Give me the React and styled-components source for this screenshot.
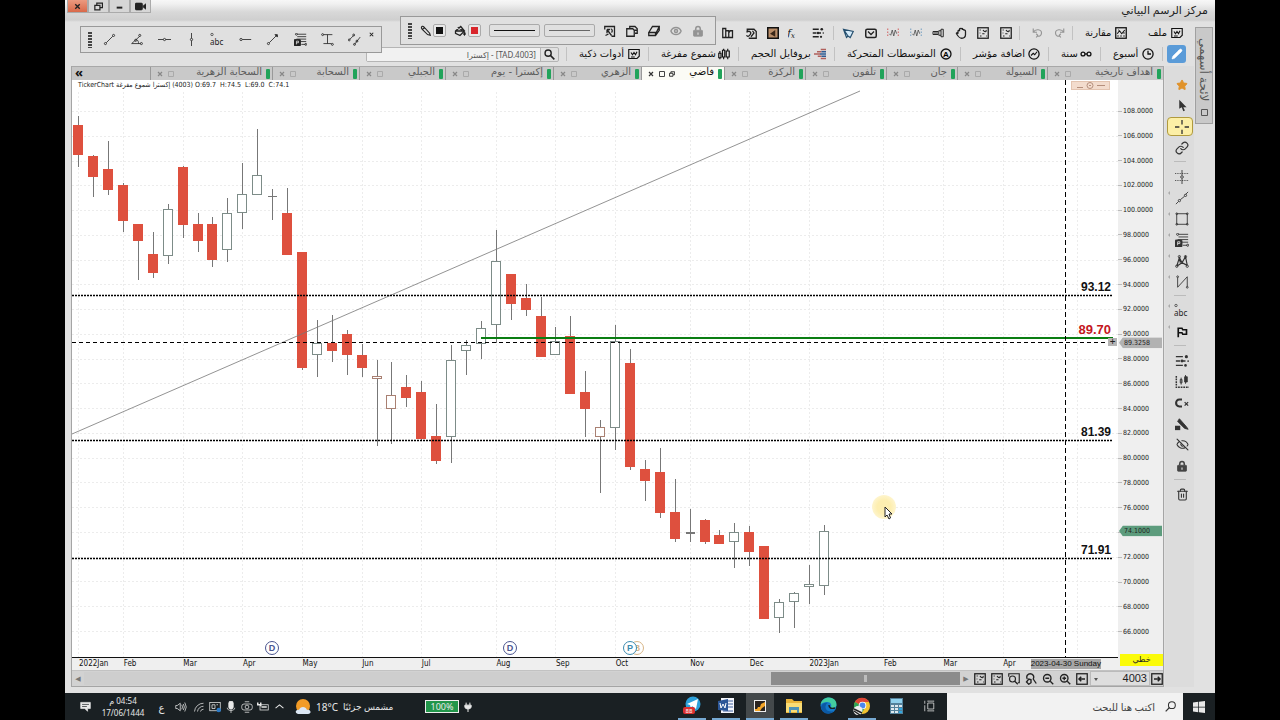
import * as React from 'react'
import styled, { createGlobalStyle, css } from 'styled-components'
import { Link, Lock, Star, Trash2, Eye, EyeOff, Pencil } from 'lucide-react'

const Global = createGlobalStyle`
    html, body, #root {
        height: 100%;
    }

    body {
        background: #000;
        margin: 0;
    }

    button, input, select {
        color: inherit;
        font: inherit;
    }

    button {
        background: none;
        border: 0;
        cursor: pointer;
        padding: 0;
    }
`

const Desktop = styled.div`
    box-sizing: border-box;
    color: #222;
    display: flex;
    flex-flow: column;
    font-family: 'Noto Sans', 'DejaVu Sans', sans-serif;
    font-size: 11px;
    height: 100vh;
    overflow: hidden;
    padding: 0 65px;
`

const Window = styled.div`
    background: #e1e1e1;
    display: flex;
    flex: 1;
    flex-flow: column;
    min-height: 0;
    position: relative;
`

const TitleBar = styled.header`
    align-items: flex-start;
    background: linear-gradient(#f7f7f7 0, #f0f0f0 4px, #d8d8d8 12px, #cfcfcf 20px, #e1e1e1 22px);
    display: flex;
    height: 22px;
    justify-content: space-between;
    padding: 0 7px 0 2px;
`

const WindowButtons = styled.div`
    display: flex;
`

const WindowButton = styled.button`
    align-items: center;
    background: ${(props) => (props.$close ? 'linear-gradient(#eb9a80, #d9694a)' : '#d6d6d6')};
    border: 1px solid #aaa;
    border-top: 0;
    display: flex;
    height: 13px;
    justify-content: center;
    width: 21px;
`

const WindowTitle = styled.h1`
    font-size: 11px;
    font-weight: 400;
    line-height: 19px;
    margin: 0;
`

const Body = styled.div`
    display: flex;
    flex: 1;
    min-height: 0;
    padding: 0 2px 6px 6px;
`

const Main = styled.div`
    display: flex;
    flex: 1;
    flex-flow: column;
    min-width: 0;
`

const Toolbar = styled.div`
    align-items: center;
    box-sizing: border-box;
    direction: rtl;
    display: flex;
    height: ${(props) => props.$height}px;
    padding-right: ${(props) => props.$inset}px;
`

const Separator = styled.i`
    background: #c2c2c2;
    height: 14px;
    margin-right: ${(props) => props.$space}px;
    width: 1px;
`

const ToolGroup = styled.div`
    display: flex;
    margin-right: ${(props) => props.$space}px;
    width: ${(props) => props.$width}px;

    & > button {
        flex: 1;
    }
`

const IconButton = styled.button`
    align-items: center;
    display: flex;
    height: 20px;
    justify-content: center;
    opacity: ${(props) => (props.$faded ? 0.4 : 1)};
`

const LabelButton = styled.button`
    align-items: center;
    color: #111;
    display: flex;
    font-family: 'DejaVu Sans', sans-serif;
    font-size: 10px;
    justify-content: space-between;
    line-height: 18px;
    margin-right: ${(props) => props.$space}px;
    white-space: nowrap;
    width: ${(props) => props.$width}px;
`

const EditButton = styled.button`
    align-items: center;
    background: #5a9bd8;
    border-radius: 3px;
    color: #fff;
    display: flex;
    height: 18px;
    justify-content: center;
    width: 19px;
`

const SearchBox = styled.div`
    border: 1px solid #b5b5b5;
    border-radius: 2px;
    box-sizing: border-box;
    display: flex;
    height: 15px;
    margin-right: 7px;
    width: 193px;
`

const SearchInput = styled.input`
    background: #f1f1f1;
    border: 0;
    border-right: 1px solid #b5b5b5;
    color: #555;
    flex: 1;
    font-size: 8px;
    min-width: 0;
    outline: 0;
    padding: 0 4px;
`

const SearchButton = styled.button`
    align-items: center;
    display: flex;
    justify-content: center;
    width: 17px;
`

const Palette = styled.div`
    align-items: center;
    background: #e0e0e0;
    border: 1px solid #999;
    box-sizing: border-box;
    display: flex;
    height: ${(props) => props.$height}px;
    left: ${(props) => props.$left}px;
    padding: 0 6px 0 7px;
    position: absolute;
    top: ${(props) => props.$top}px;
    width: ${(props) => props.$width}px;
    z-index: 10;
`

const Grip = styled.i`
    background: radial-gradient(circle at 1px 1px, #444 1px, transparent 1px) 0 0 / 2px 3px;
    height: 16px;
    width: 4px;
`

const PaletteTools = styled.div`
    display: flex;
    flex: 1;
    padding-left: ${(props) => props.$space || 0}px;

    & > button {
        flex: 1;
    }
`

const PenTools = styled.div`
    align-items: center;
    display: flex;
    padding-left: 8px;
`

const CloseButton = styled.button`
    align-self: flex-start;
    display: flex;
    margin-top: 4px;
`

const Swatch = styled.button`
    background: ${(props) => props.$color};
    border: 3px solid #e8e8e8;
    border-radius: 2px;
    box-sizing: border-box;
    height: 13px;
    margin: 0 8px 0 2px;
    outline: 1px solid #aaa;
    outline-offset: -1px;
    width: 13px;
`

const LineStyle = styled.button`
    align-items: center;
    border: 1px solid #aaa;
    border-radius: 2px;
    box-sizing: border-box;
    display: flex;
    height: 13px;
    margin-right: 4px;
    padding: 0 4px;
    width: 51px;

    &::after {
        background: ${(props) => props.$color};
        content: '';
        flex: 1;
        height: 1px;
    }
`

const Workspace = styled.div`
    display: flex;
    flex: 1;
    margin-top: 2px;
    min-height: 0;
`

const ChartColumn = styled.div`
    border: 1px solid #a5a5a5;
    border-top: 0;
    box-sizing: border-box;
    display: flex;
    flex: 1;
    flex-flow: column;
    min-width: 0;
`

const Tabs = styled.nav`
    background: #c6c6c6;
    border-top: 1px solid #a8a8a8;
    box-sizing: border-box;
    direction: rtl;
    display: flex;
    height: 14px;
`

const TabItem = styled.div`
    align-items: center;
    background: ${(props) => (props.$active ? '#fbfbf5' : '#c9c9c9')};
    border-left: 1px solid #999;
    box-sizing: border-box;
    color: ${(props) => (props.$active ? '#111' : '#5c5c5c')};
    display: flex;
    flex: 0 0 ${(props) => props.$width}px;
    gap: 4px;
    padding: 0 2px 0 5px;
`

const TabName = styled.button`
    flex: 1;
    font-family: 'DejaVu Sans', sans-serif;
    font-size: 10px;
    line-height: 10px;
    padding-bottom: 3px;
    text-align: right;
    white-space: nowrap;
`

const Marker = styled.i`
    background: #21a35a;
    border-radius: 1px;
    height: 10px;
    width: 4px;
`

const TabMore = styled.button`
    color: #111;
    font-size: 13px;
    font-weight: 700;
    line-height: 9px;
    margin-right: auto;
    padding: 0 3px 3px;
`

const ChartArea = styled.div`
    display: flex;
    flex: 1;
    min-height: 0;
`

const PlotColumn = styled.div`
    display: flex;
    flex: 1;
    flex-flow: column;
    min-width: 0;
`

const Plot = styled.div`
    background: #fff;
    border-bottom: 1px solid #111;
    box-sizing: border-box;
    flex: 1;
    min-height: 0;
    position: relative;
`

const PlotSvg = styled.svg`
    display: block;
    height: 100%;
    left: 0;
    position: absolute;
    top: 0;
    width: 100%;
`

const PlotCaption = styled.div`
    color: #222;
    font-family: 'DejaVu Sans Condensed', 'DejaVu Sans', sans-serif;
    font-size: 7px;
    left: 6px;
    line-height: 8px;
    position: absolute;
    top: 1px;
    white-space: pre;
`

const PlotMini = styled.div`
    align-items: center;
    background: #f3dccd;
    border: 1px solid #e3c4b0;
    box-sizing: border-box;
    color: #b99;
    display: flex;
    height: 9px;
    justify-content: space-around;
    position: absolute;
    right: 8px;
    top: 1px;
    width: 39px;
`

const LevelLabel = styled.span`
    color: ${(props) => props.$color};
    font-family: 'Liberation Sans', Arial, sans-serif;
    font-size: ${(props) => props.$size}px;
    font-weight: 700;
    line-height: 14px;
    position: absolute;
    right: 7px;
    transform: translateY(-100%);
`

const EventBadge = styled.span`
    align-items: center;
    background: #fff;
    border: 1px solid ${(props) => props.$color};
    border-radius: 50%;
    bottom: 2px;
    box-sizing: border-box;
    color: ${(props) => props.$color};
    display: flex;
    font-family: 'Liberation Sans', Arial, sans-serif;
    font-size: 9px;
    font-weight: 700;
    height: 14px;
    justify-content: center;
    position: absolute;
    transform: translateX(-50%);
    width: 14px;
`

const CrossHandle = styled.span`
    background: #b5b5b5;
    font-size: 10px;
    height: 8px;
    line-height: 7px;
    position: absolute;
    right: 1px;
    text-align: center;
    transform: translateY(-50%);
    width: 9px;
`

const Pointer = styled.div`
    background: radial-gradient(circle, #fdeeb0 40%, #fffbea 100%);
    border-radius: 50%;
    height: 24px;
    position: absolute;
    transform: translate(-50%, -50%);
    width: 24px;

    svg {
        left: 12px;
        overflow: visible;
        position: absolute;
        top: 11px;
    }
`

const Dates = styled.div`
    background: #efefef;
    box-sizing: border-box;
    color: #111;
    display: flex;
    font-family: 'DejaVu Sans Condensed', 'DejaVu Sans', sans-serif;
    font-size: 8px;
    height: 12px;
    line-height: 11px;
    padding-left: 7px;
    position: relative;
`

const Month = styled.span`
    flex: ${(props) => props.$weeks} 0 0;
    min-width: 0;
    white-space: nowrap;
`

const DateTag = styled.span`
    background: #a6a6a6;
    font-family: 'Liberation Sans', Arial, sans-serif;
    line-height: 10px;
    position: absolute;
    right: 17px;
    top: 1px;
`

const PriceAxis = styled.div`
    background: #efefef;
    display: flex;
    flex: 0 0 45px;
    flex-flow: column;
    font-family: 'DejaVu Sans Condensed', 'DejaVu Sans', sans-serif;
    font-size: 7px;
    justify-content: space-between;
    position: relative;
`

const Scale = styled.div`
    display: flex;
    flex: 1;
    flex-flow: column;
    justify-content: space-between;
    min-height: 0;
    padding: 26px 0 17px;
`

const Price = styled.span`
    align-items: center;
    display: flex;
    gap: 1px;
    height: 10px;
    line-height: 10px;

    &::before {
        background: #bbb;
        content: '';
        height: 1px;
        width: 4px;
    }
`

const PriceTag = styled.span`
    background: ${(props) => props.$color};
    clip-path: polygon(0 50%, 4px 0, 100% 0, 100% 100%, 4px 100%);
    left: 1px;
    line-height: 11px;
    padding-left: 5px;
    position: absolute;
    right: 1px;
    transform: translateY(-50%);
`

const ScaleMode = styled.button`
    background: #fbfb0a;
    font-family: 'DejaVu Sans', sans-serif;
    font-size: 8px;
    height: 12px;
    line-height: 12px;
    margin: 0 0 4px 2px;
`

const BottomBar = styled.div`
    align-items: center;
    background: #d2d2d2;
    border-top: 1px solid #c2c2c2;
    box-sizing: border-box;
    display: flex;
    height: 16px;
`

const Scroll = styled.div`
    align-items: center;
    display: flex;
    flex: 1;
    height: 100%;
`

const ScrollArrow = styled.button`
    color: #777;
    font-size: 7px;
    line-height: 10px;
    width: 12px;
`

const Track = styled.div`
    background: #cecece;
    display: flex;
    flex: 1;
    height: 13px;
    justify-content: flex-end;
`

const Thumb = styled.div`
    align-items: center;
    background: #8c8c8c;
    display: flex;
    justify-content: center;
    width: 21.6%;

    &::after {
        background: #bdbdbd;
        content: '';
        height: 7px;
        width: 3px;
    }
`

const BottomTools = styled.div`
    align-items: center;
    display: flex;
    width: 118px;

    & > button {
        flex: 1;
        height: 15px;
    }
`

const CodeSelect = styled.select`
    appearance: none;
    background: #dedede url("data:image/svg+xml,%3Csvg xmlns='http://www.w3.org/2000/svg' width='5' height='4'%3E%3Cpath d='M0 0h4L2 3z' fill='%23555'/%3E%3C/svg%3E") 3px 6px no-repeat;
    border: 1px solid #bbb;
    font-family: 'Liberation Sans', Arial, sans-serif;
    font-size: 11px;
    height: 15px;
    line-height: 13px;
    padding: 0 2px;
    text-align: right;
    text-align-last: right;
    width: 60px;
`

const NextButton = styled.button`
    align-items: center;
    display: flex;
    height: 15px;
    justify-content: center;
    width: 13px;
`

const ToolColumn = styled.aside`
    align-items: center;
    background: #dcdcdc;
    display: flex;
    flex: 0 0 29px;
    flex-flow: column;
    margin-left: 1px;
    padding-top: 8px;
`

const Tool = styled.button`
    align-items: center;
    box-sizing: border-box;
    color: #333;
    display: flex;
    height: 21px;
    justify-content: center;
    padding-left: 5px;
    position: relative;
    width: 26px;

    ${(props) =>
        props.$active &&
        css`
            background: #fcefa6;
            border: 1px solid #b09a3e;
            border-radius: 4px;
            height: 19px;
            margin: 1px 0;
            padding-left: 4px;
        `}

    ${(props) =>
        props.$menu &&
        css`
            &::before {
                border: 2px solid transparent;
                border-right-color: #aaa;
                content: '';
                left: -1px;
                position: absolute;
                top: 4px;
            }
        `}
`

const ToolRule = styled.hr`
    border: 0;
    border-top: 1px solid #bbb;
    margin: 3px 0 4px;
    width: 12px;
`

const SidePanel = styled.aside`
    box-sizing: border-box;
    padding: 5px 0 0 1px;
    width: 19px;
`

const SideTab = styled.button`
    align-items: center;
    background: #c9c9c9;
    border: 1px solid #a0a0a0;
    box-sizing: border-box;
    color: #555;
    direction: rtl;
    display: flex;
    font-size: 12px;
    gap: 8px;
    height: 97px;
    padding: 7px 0;
    white-space: nowrap;
    width: 18px;
    writing-mode: vertical-rl;
`

const Taskbar = styled.footer`
    align-items: center;
    background: #1a2023;
    color: #e8e8e8;
    display: flex;
    font-size: 10px;
    height: 27px;
`

const Tray = styled.div`
    align-items: center;
    display: flex;
    flex: 1;
    padding-left: 12px;
`

const TrayButton = styled.button`
    align-items: center;
    display: flex;
    height: 27px;
    justify-content: center;
    width: ${(props) => props.$width || 17}px;
`

const Clock = styled.button`
    font-size: 8px;
    line-height: 12px;
    text-align: center;
    width: 58px;
`

const Weather = styled.button`
    align-items: center;
    display: flex;
    gap: 5px;
    line-height: 16px;
    margin-left: 8px;
    white-space: nowrap;
    width: 99px;
`

const WeatherText = styled.span`
    font-size: 9px;
`

const Battery = styled.div`
    background: #22964a;
    border: 1px solid #eee;
    box-sizing: border-box;
    font-size: 9px;
    height: 13px;
    line-height: 11px;
    margin-left: 31px;
    text-align: center;
    width: 34px;
`

const AppButton = styled.button`
    align-items: center;
    background: ${(props) => (props.$active ? '#44494b' : 'none')};
    border-bottom: 2px solid ${(props) => (props.$open ? '#76a9d2' : 'transparent')};
    box-sizing: border-box;
    display: flex;
    height: 27px;
    justify-content: center;
    margin: 0 3px;
    width: 28px;
`

const TaskSearch = styled.label`
    align-items: center;
    background: #f2f2f2;
    box-sizing: border-box;
    color: #333;
    direction: rtl;
    display: flex;
    gap: 10px;
    height: 27px;
    padding: 0 7px;
    width: 236px;
`

const TaskInput = styled.input`
    background: none;
    border: 0;
    flex: 1;
    font-size: 10px;
    min-width: 0;
    outline: 0;
    padding: 0;

    &::placeholder {
        color: #444;
        opacity: 1;
    }
`

const StartButton = styled.button`
    align-items: center;
    display: flex;
    height: 27px;
    justify-content: center;
    width: 32px;
`

// 16 x 16 line drawings
const glyphs = {
    close: <path d="M4 4l8 8M12 4l-8 8" strokeWidth="2.4" />,
    restore: <path d="M5 6V2h10v8h-4M1.500 6h9v8h-9z" strokeWidth="2.2" />,
    minimize: <path d="M3 10h10" strokeWidth="3.500" />,
    camera: (
        <>
            <rect x="0" y="3" width="11" height="10" rx="2" fill="currentColor" />
            <path d="M12 7l4-3v8l-4-3z" fill="currentColor" />
        </>
    ),
    segment: (
        <>
            <path d="M4 12l8-8" />
            <circle cx="3" cy="13" r="1.300" />
            <circle cx="13" cy="3" r="1.300" />
        </>
    ),
    angle: (
        <>
            <path d="M2 13L12 4M2 13h11M8 8c2 1 2.500 3 2.500 5" />
            <circle cx="12" cy="3" r="1.300" />
            <circle cx="7" cy="9" r="1.300" />
            <circle cx="14" cy="13" r="1.300" />
        </>
    ),
    horizontal: (
        <>
            <path d="M0 8h6.500M9.500 8H16" />
            <circle cx="8" cy="8" r="1.400" />
        </>
    ),
    vertical: (
        <>
            <path d="M8 0v6.500M8 9.500V16" />
            <circle cx="8" cy="8" r="1.400" />
        </>
    ),
    ray: (
        <>
            <path d="M4 8h11" />
            <circle cx="2.500" cy="8" r="1.400" />
        </>
    ),
    arrow: (
        <>
            <path d="M4 12l9-9" />
            <path d="M11 2h3v3z" fill="currentColor" />
            <circle cx="3" cy="13" r="1.300" />
        </>
    ),
    fib: (
        <>
            <path d="M4 1.500h11M4 4.500h11M3 7.500h12M8 10.500h7M9 14h5" />
            <circle cx="3" cy="1.500" r="1.200" />
            <circle cx="14.500" cy="14" r="1.200" />
            <rect x="0" y="8" width="8" height="8" rx="1" fill="currentColor" />
            <path d="M3 14v-4h2.500v2H3" stroke="#ddd" />
        </>
    ),
    measure: (
        <>
            <path d="M3 2h11M8 2v11M3 13h10" />
            <circle cx="2" cy="2" r="1.200" />
            <circle cx="14" cy="14" r="1.200" />
        </>
    ),
    channel: (
        <>
            <path d="M2 8l5-5M8 14l7-9" />
            <circle cx="1.500" cy="8.500" r="1.200" />
            <circle cx="7" cy="2.500" r="1.200" />
            <circle cx="8" cy="14" r="1.200" />
            <circle cx="11" cy="10" r="1.200" />
        </>
    ),
    pen: <path d="M2 4c0-2 2-3 4-1l8 9 1 3-4-1-8-8zM4 6l3-3" strokeWidth="1.600" />,
    bucket: (
        <>
            <path d="M2 8l7-6 5 6-6 6-6-3zM5 3l6 4M2 8h11" strokeWidth="1.700" />
            <path d="M14 9c2 3 1 4 0 5-2-1-1-3 0-5z" fill="currentColor" />
        </>
    ),
    select: <path d="M1 6V2h13v13h-4M2 14l4-2M4 6l6 8M4 6v5M4 6h4M9 5c3 1 2 4 1 5" strokeWidth="1.700" />,
    copy: <path d="M5 5V2h7l3 3v6h-3M1 5h8l2 2v8H1zM5 2v3M11 7h4" strokeWidth="1.700" />,
    eraser: <path d="M1 10l5-8h9l-4 8zM1 10v4h9l5-7V2M10 10v4" strokeWidth="1.700" />,
    chartBox: (
        <>
            <rect x="1" y="1" width="14" height="14" strokeWidth="1.700" />
            <path d="M3 9l3-4 3 4 4-5M3 12h2M7 12h2M11 12h2M4 4h1M11 8h2" strokeWidth="1.400" />
        </>
    ),
    smallBox: (
        <>
            <rect x="1" y="1" width="14" height="14" strokeWidth="1.700" />
            <path d="M3.500 4h1.500M3.500 8h1M4 12h2M8 4c2 3 5 3 4 0M7 9h3M12 12h1" strokeWidth="1.500" />
        </>
    ),
    scroll: <path d="M3 3h9l3 3v9H5M3 6V2M2 7c4-3 7 0 5 3s-4 3-5 1M10 5l2 3-4 5" strokeWidth="1.700" />,
    undo: <path d="M3 2v5h5M3 7c3-5 11-4 11 1 0 4-4 5-6 4M7 9l2 2-2 3" strokeWidth="1.500" />,
    redo: <path d="M13 2v5H8M13 7C10 2 2 3 2 8c0 4 4 5 6 4M9 9l-2 2 2 3" strokeWidth="1.500" />,
    hand: (
        <path
            d="M4 9V5.500c0-1.500 2-1.500 2 0V3c0-1.500 2-1.500 2 0 0-1.500 2-1.500 2 0v1c0-1.500 2-1 2 0v1c0-1.200 2-1 2 .5V10c0 3-2 5-5 5S5 14 2 9c-.5-1.500 1-2 2 0z"
            strokeWidth="1.700"
        />
    ),
    pin: <path d="M0 8h8M9 5v6M9 5h3M9 11h3M12 3h3v10h-3zM1 6h7M1 10h7" strokeWidth="1.300" />,
    waves: (
        <>
            <path d="M1 2v12M15 2v12" stroke="currentColor" strokeDasharray="2 2" />
            <path d="M3 9l2 2 2-7 2 8 2-8 2 5" stroke="#444" />
        </>
    ),
    mail: (
        <>
            <rect x="1" y="3" width="14" height="11" rx="2" strokeWidth="2" />
            <path d="M4 6l4 4 4-4" strokeWidth="1.700" />
        </>
    ),
    share: <path d="M2 3l13 3-4 8-3-2-2 2zM8 12L2 3" fill="#d6ecfb" stroke="#26506f" strokeWidth="1.600" />,
    settings: (
        <>
            <path d="M1 3h8M1 8h5M9 8h3M1 13h8" strokeWidth="1.700" />
            <circle cx="13" cy="3" r="1.800" fill="currentColor" stroke="none" />
            <circle cx="8" cy="8" r="1.600" fill="currentColor" stroke="none" />
            <circle cx="12" cy="13" r="1.500" fill="currentColor" stroke="none" />
            <circle cx="15" cy="8" r="1" fill="currentColor" stroke="none" />
        </>
    ),
    sound: (
        <>
            <rect x="1" y="1" width="14" height="14" fill="#b98d68" stroke="#111" strokeWidth="2" />
            <path d="M4 9l7-5v9z" fill="#3a2718" stroke="none" />
        </>
    ),
    bars: <path d="M1 14V2h4v12zM5 14V5h4v9zM9 14V8l2-3h3v9z" strokeWidth="1.700" />,
    clock: (
        <>
            <circle cx="8" cy="8" r="6.800" strokeWidth="1.700" />
            <path d="M8 3.500V8h4" strokeWidth="1.700" />
        </>
    ),
    range: (
        <>
            <circle cx="4" cy="8" r="2.600" strokeWidth="1.700" />
            <circle cx="12" cy="8" r="2.600" strokeWidth="1.700" />
            <path d="M6.500 8h3" strokeWidth="1.700" />
        </>
    ),
    trend: (
        <>
            <circle cx="8" cy="8" r="6.800" strokeWidth="1.700" />
            <path d="M4 10l3-3 2 2 3-4" strokeWidth="1.500" />
        </>
    ),
    profile: (
        <>
            <path d="M9 2h7M4 5h6M0 8h8M5 11h5M9 14h7" stroke="#b0605c" strokeWidth="2" />
            <path d="M10 5h6M8 8h8M10 11h6" stroke="#2e5b92" strokeWidth="2" />
        </>
    ),
    candles: (
        <path
            d="M1 7h3v6H1zM6 3h3v9H6zM11 4h4v8h-4zM2.500 4v3M2.500 13v2M7.500 1v2M7.500 12v3M13 1v3M13 12v3"
            strokeWidth="1.500"
        />
    ),
    smart: <path d="M1 14V2h14v9l-3 3zM4 6l2 3 2-3 2 3 2-4M4 12h5" strokeWidth="1.500" />,
    search: (
        <>
            <circle cx="6" cy="6" r="4.500" strokeWidth="2" />
            <path d="M9.500 9.500L15 15" strokeWidth="2.400" />
        </>
    ),
    zoomIn: (
        <>
            <circle cx="7" cy="7" r="5" strokeWidth="1.800" />
            <path d="M11 11l4 4M4.500 7h5M7 4.500v5" strokeWidth="1.800" />
        </>
    ),
    zoomOut: (
        <>
            <circle cx="7" cy="7" r="5" strokeWidth="1.800" />
            <path d="M11 11l4 4M4.500 7h5" strokeWidth="1.800" />
        </>
    ),
    zoomReset: <path d="M3 8c-2-4 1-7 4-7s6 3 4 7l4 6M8 9l-3-1-3 4 3 3 3-2z" strokeWidth="1.800" />,
    zoomArea: (
        <>
            <path d="M1 5V1h14v12h-2" strokeWidth="1.500" />
            <circle cx="6" cy="8" r="4" strokeWidth="1.500" />
            <path d="M9 11l4 4" strokeWidth="1.700" />
        </>
    ),
    previous: (
        <>
            <rect x="1" y="1" width="14" height="14" strokeWidth="1.700" />
            <path d="M12 8H4M7 5L4 8l3 3" strokeWidth="2" />
        </>
    ),
    next: (
        <>
            <rect x="1" y="1" width="14" height="14" strokeWidth="1.700" />
            <path d="M4 8h8M9 5l3 3-3 3" strokeWidth="2" />
        </>
    ),
    cursor: <path d="M4 1v11l3-2 2 5 2-1-2-4h4z" fill="currentColor" stroke="none" />,
    cross: <path d="M8 0v5M8 11v5M0 8h5M11 8h5" strokeWidth="1.500" />,
    crossThin: (
        <>
            <path d="M8 0v6M8 10v6" />
            <path d="M0 4h16M0 12h16" strokeDasharray="1 1" />
            <circle cx="8" cy="8" r="1.500" />
        </>
    ),
    line: (
        <>
            <path d="M1 15l3-3M6 10l5-4M12 4l3-3" />
            <circle cx="5" cy="11" r="1.300" />
            <circle cx="12" cy="5" r="1.300" />
        </>
    ),
    box: (
        <>
            <rect x="2" y="2" width="12" height="12" />
            <circle cx="2" cy="2" r="1" />
            <circle cx="14" cy="2" r="1" />
            <circle cx="2" cy="14" r="1" />
            <circle cx="14" cy="14" r="1" />
        </>
    ),
    pattern: (
        <>
            <path d="M2 14L5 4l3 6 4-7 2 10M2 14l6-4 6 3M5 4l1 6" strokeWidth="1.300" />
            <circle cx="5" cy="3" r="1.300" />
            <circle cx="12" cy="3" r="1.300" />
            <circle cx="2" cy="14" r="1.300" />
            <circle cx="14" cy="14" r="1.300" />
        </>
    ),
    zigzag: (
        <>
            <path d="M3 14V3M3 14L14 2v11" />
            <circle cx="3" cy="2" r="1" />
            <circle cx="14" cy="14" r="1" />
        </>
    ),
    flag: <path d="M3 15V3h5l1 2h5v6H9L8 9H3" strokeWidth="2.200" />,
    candleChart: (
        <>
            <path d="M1.500 1v13H16" strokeWidth="1.700" strokeDasharray="2 1" />
            <path d="M7 3v8M12 0v10" />
            <path d="M6 5h2v4H6z" />
            <path d="M11 2h3v6h-3z" fill="currentColor" />
        </>
    ),
    magnet: (
        <>
            <path d="M8 4H5C0 4 0 12 5 12h3" strokeWidth="2.400" />
            <path d="M11 7l4 4M15 7l-4 4" strokeWidth="1.400" />
        </>
    ),
    penLock: (
        <>
            <path d="M5 2l8 9 2 3-4-1-8-8z" fill="currentColor" />
            <rect x="0" y="10" width="6" height="5" fill="currentColor" stroke="none" />
        </>
    ),
    padlock: (
        <>
            <rect x="2" y="7" width="12" height="8" rx="1" fill="currentColor" />
            <path d="M5 7V5c0-4 6-4 6 0v2" strokeWidth="2" />
            <path d="M8 10v3" stroke="#ddd" strokeWidth="1.500" />
        </>
    ),
    notice: (
        <>
            <path d="M1 2h14v9h-4v4l-4-4H1z" fill="currentColor" />
            <path d="M3 5h10M3 8h7" stroke="#1a2023" />
        </>
    ),
    volume: <path d="M1 6h2l4-3v10L3 10H1zM9 5q2 3 0 6M11 4q3 4 0 8M13 2q4 6 0 12" />,
    wifi: <path d="M2 14A12 12 0 0 1 14 3M6 14a8 8 0 0 1 8-7M10 14a4 4 0 0 1 4-3" />,
    screen: (
        <>
            <rect x="1" y="2" width="14" height="11" />
            <path d="M4 5h4v5H4zM10 5h2" />
            <circle cx="13" cy="12" r="3" fill="#2a79c5" stroke="none" />
        </>
    ),
    mic: (
        <>
            <rect x="5" y="0" width="6" height="11" rx="3" fill="currentColor" />
            <path d="M3 9c0 5 10 5 10 0M8 13v3" />
        </>
    ),
    webcam: (
        <>
            <rect x="1" y="4" width="14" height="8" rx="3" />
            <circle cx="8" cy="8" r="2.500" />
            <path d="M5 1h6M5 15h6" />
        </>
    ),
    power: (
        <>
            <rect x="4" y="5" width="11" height="7" />
            <path d="M1 2v3h4M5 2v5M6 8h7" strokeWidth="2" />
        </>
    ),
    chevron: <path d="M1 11l7-6 7 6" strokeWidth="1.800" />,
    plug: <path d="M5 1v4M11 1v4M3 5h10v3c0 4-10 4-10 0zM8 11v5" fill="currentColor" strokeWidth="1.600" />,
    loupe: (
        <>
            <circle cx="10" cy="6" r="5" strokeWidth="1.500" />
            <path d="M6.500 9.500L1 15" strokeWidth="1.700" />
        </>
    ),
    taskView: <path d="M5 4h8v8H5zM5 1v1M13 1v1M5 14v1M13 14v1M5 1.500h8M5 14.500h8M1 1v4M1 7v8" />,
    windows: (
        <path
            d="M0 2l7-1v6.500H0zM8 1l8-1v7.500H8zM0 8.500h7V15l-7-1zM8 8.500h8V16l-8-1z"
            fill="currentColor"
            stroke="none"
        />
    )
}

const Icon = ({ name, size = 12, color }) => (
    <svg
        width={size}
        height={size}
        viewBox="0 0 16 16"
        fill="none"
        stroke="currentColor"
        color={color}
        aria-hidden="true">
        {glyphs[name]}
    </svg>
)

const AbcIcon = () => (
    <svg width="16" height="16" viewBox="0 0 16 16" aria-hidden="true">
        <circle cx="2" cy="2.500" r="1.200" fill="none" stroke="#444" strokeWidth="0.800" />
        <text x="0" y="13" fontSize="8" fontFamily="Noto Sans, sans-serif" fill="#222">
            abc
        </text>
    </svg>
)

const FxIcon = () => (
    <svg width="14" height="14" viewBox="0 0 14 14" aria-hidden="true">
        <g fontStyle="italic" fontFamily="DejaVu Serif, serif" fill="#111">
            <text x="3" y="10" fontSize="10">f</text>
            <text x="7" y="12" fontSize="7">x</text>
        </g>
    </svg>
)

const AverageIcon = () => (
    <svg width="12" height="12" viewBox="0 0 12 12" aria-hidden="true">
        <circle cx="6" cy="6" r="5" fill="none" stroke="#111" strokeWidth="1.300" />
        <text x="6" y="9" fontSize="8" fontWeight="700" textAnchor="middle" fontFamily="Liberation Sans, sans-serif">
            A
        </text>
    </svg>
)

const TelegramIcon = () => (
    <svg width="18" height="19" viewBox="0 0 18 19" aria-hidden="true">
        <circle cx="10" cy="8" r="7.500" fill="#2ca0da" />
        <path d="M4 8l11-5-2 10-4-3-1 3-1-4z" fill="#fff" />
        <rect x="0" y="11" width="12" height="7" rx="2" fill="#dc3030" />
        <text x="6" y="17" fontSize="6" fill="#fff" textAnchor="middle" fontFamily="Noto Sans, sans-serif">
            88
        </text>
    </svg>
)

const WordIcon = () => (
    <svg width="16" height="16" viewBox="0 0 16 16" aria-hidden="true">
        <path d="M3 0h13v15H3z" fill="#f4f6fb" />
        <path d="M10 3h5M10 6h5M10 9h5M5 13h10" stroke="#40609d" />
        <path d="M0 3l10-2v12L0 12z" fill="#2c5697" />
        <path d="M2 5l1 5 2-4 2 4 1-5" stroke="#fff" fill="none" />
    </svg>
)

const TickerIcon = () => (
    <svg width="12" height="12" viewBox="0 0 12 12" aria-hidden="true">
        <rect width="12" height="12" fill="#eee" />
        <rect x="1" y="1" width="10" height="10" fill="#2a2420" />
        <path d="M1 11V9h2l1-2h2l1-3 4-2v4L8 8l-2 3z" fill="#f3a629" />
    </svg>
)

const FolderIcon = () => (
    <svg width="16" height="14" viewBox="0 0 16 14" aria-hidden="true">
        <path d="M0 0h6l2 2h8v12H0z" fill="#e9b43a" />
        <path d="M0 4h16v9H0z" fill="#f9dc76" />
        <path d="M3 14V8h10v6h-2v-3H5v3z" fill="#4d92b8" />
    </svg>
)

const EdgeIcon = () => (
    <svg width="17" height="17" viewBox="0 0 17 17" aria-hidden="true">
        <circle cx="8.500" cy="8.500" r="8" fill="#1479c9" />
        <path d="M.5 8C1 3 5 .5 9 .5s8 3 7.500 7.500c-.5 3-4 4-6 3 2-3 0-6-3-6S1 6 .5 8z" fill="#43cda0" />
        <path d="M6 8c-2 4 2 8 8 6-6 6-13 1-13-4 1-4 4-5 7-4-1 0-2 1-2 2z" fill="#0c59a4" />
        <path d="M9 8c0 3 2 4 6 3" stroke="#1a2023" strokeWidth="1.500" fill="none" />
    </svg>
)

const ChromeIcon = () => (
    <svg width="18" height="18" viewBox="0 0 18 18" aria-hidden="true">
        <circle cx="9" cy="9" r="8" fill="#f2c230" />
        <path d="M9 9L2 5a8 8 0 0 1 14 0H9z" fill="#dd4436" />
        <path d="M9 9L2 5a8 8 0 0 0 6 12l4-6z" fill="#2fa254" />
        <circle cx="9.500" cy="8.500" r="3.800" fill="#fff" />
        <circle cx="9.500" cy="8.500" r="2.900" fill="#4a87ed" />
        <circle cx="5" cy="13.500" r="4.500" fill="#eee" />
        <path d="M1 12l8 4M1 14l6 4" stroke="#222" strokeWidth="1.500" />
    </svg>
)

const CalculatorIcon = () => (
    <svg width="13" height="16" viewBox="0 0 13 16" aria-hidden="true">
        <rect width="13" height="16" fill="#53809a" />
        <rect x="1" y="1" width="11" height="4" fill="#8fd0ec" />
        <path d="M1 8h11M1 11h11M1 14h11" stroke="#dde8ee" strokeWidth="2" strokeDasharray="3 1" />
        <path d="M9 11h3M9 14h3" stroke="#2fa6df" strokeWidth="2" />
    </svg>
)

const WeatherIcon = () => (
    <svg width="16" height="17" viewBox="0 0 16 17" aria-hidden="true">
        <circle cx="8" cy="8" r="7" fill="#f29b26" />
        <path d="M3 16c-4-1-2-5 1-4 1-4 7-4 8 0 4-1 5 4 1 4z" fill="#dce7f4" />
    </svg>
)

const tabs = [
    { name: 'اهداف تاريخية', width: 116 },
    { name: 'السيولة', width: 90 },
    { name: 'جان', width: 71 },
    { name: 'تلفون', width: 81 },
    { name: 'الركزة', width: 81 },
    { name: 'فاضي', width: 83, active: true },
    { name: 'الزهري', width: 88 },
    { name: 'إكسترا - يوم', width: 108 },
    { name: 'الجبلي', width: 86 },
    { name: 'السحابة', width: 87 },
    { name: 'السحابة الزهرية', width: 122 }
]

const months = [
    ['2022Jan', 3],
    ['Feb', 4],
    ['Mar', 4],
    ['Apr', 4],
    ['May', 4],
    ['Jun', 4],
    ['Jul', 5],
    ['Aug', 4],
    ['Sep', 4],
    ['Oct', 5],
    ['Nov', 4],
    ['Dec', 4],
    ['2023Jan', 5],
    ['Feb', 4],
    ['Mar', 4],
    ['Apr', 7.7]
]

const scale = Array.from({ length: 22 }, (_, index) => 108 - index * 2)
const lastPrice = 74.1

// r: falling, w: rising, h: hollow falling. Values are high, top, bottom, low in plot units
const candles = [
    ['r', 36, 45, 75, 87],
    ['r', 75, 76, 97, 117],
    ['r', 61, 89, 110, 115],
    ['r', 103, 105, 141, 152],
    ['r', 144, 144, 161, 200],
    ['r', 152, 174, 193, 198],
    ['w', 124, 129, 176, 184],
    ['r', 86, 87, 145, 158],
    ['r', 133, 144, 161, 172],
    ['r', 137, 144, 180, 187],
    ['w', 118, 133, 170, 182],
    ['w', 83, 114, 133, 149],
    ['w', 49, 95, 115, 115],
    ['w', 109, 116, 117, 140],
    ['r', 108, 133, 175, 175],
    ['r', 172, 172, 288, 290],
    ['w', 240, 263, 275, 297],
    ['r', 235, 263, 271, 282],
    ['r', 250, 254, 275, 295],
    ['r', 264, 275, 288, 297],
    ['h', 280, 296, 299, 366],
    ['h', 282, 315, 329, 364],
    ['r', 295, 307, 318, 327],
    ['r', 301, 312, 359, 360],
    ['r', 324, 356, 381, 384],
    ['w', 265, 280, 357, 383],
    ['w', 260, 265, 271, 295],
    ['w', 241, 248, 264, 279],
    ['w', 150, 181, 245, 263],
    ['r', 194, 194, 224, 240],
    ['r', 204, 218, 230, 236],
    ['r', 217, 236, 277, 277],
    ['w', 247, 261, 275, 275],
    ['r', 236, 256, 314, 314],
    ['r', 291, 312, 329, 357],
    ['h', 340, 347, 357, 413],
    ['w', 245, 261, 348, 370],
    ['r', 269, 283, 387, 390],
    ['r', 380, 389, 401, 421],
    ['r', 368, 392, 433, 438],
    ['r', 399, 432, 459, 462],
    ['h', 429, 452, 454, 462],
    ['r', 439, 440, 462, 464],
    ['r', 450, 455, 464, 464],
    ['w', 443, 452, 462, 488],
    ['r', 446, 452, 472, 486],
    ['r', 466, 466, 539, 539],
    ['w', 519, 522, 538, 553],
    ['w', 512, 513, 522, 548],
    ['w', 485, 504, 507, 524],
    ['w', 445, 451, 506, 515]
]

const WIDTH = 1046
const HEIGHT = 577
const STEP = 14.91
const START = 6.3

const candleX = (index) => Math.round(START + index * STEP)
const priceY = (price) => 31 + (108 - price) * 12.38
const left = (value) => ({ left: `${(value / WIDTH) * 100}%` })
const top = (value) => ({ top: `${(value / HEIGHT) * 100}%` })

const levels = [
    { value: 93.12, color: '#111', size: 12 },
    { value: 89.7, color: '#c4161c', size: 13, line: true },
    { value: 81.39, color: '#111', size: 12 },
    { value: 71.91, color: '#111', size: 12 }
]

const monthLines = months.reduce((lines, month) => [...lines, lines[lines.length - 1] + month[1]], [0])
monthLines.splice(-1, 1, 67)

const Candle = ({ kind, x, high, open, close, low }) => {
    const stroke = { r: '#b84a3a', w: '#7d8c88', h: '#a98072' }[kind]
    const size = close - open
    return (
        <g stroke={stroke}>
            <path d={`M${x + 0.5} ${high}V${open}M${x + 0.5} ${close}V${low}`} stroke="#777" />
            {kind === 'r' && <rect x={x - 5} y={open} width="10" height={size} fill="#de503e" stroke="none" />}
            {kind !== 'r' && size > 2 && (
                <rect x={x - 4.5} y={open + 0.5} width="9" height={size - 1} fill="#fff" />
            )}
            {kind !== 'r' && size <= 2 && (
                <path d={`M${x - 4} ${open + size / 2}h9`} stroke="#777" strokeWidth={size} />
            )}
        </g>
    )
}

const PricePlot = () => (
    <Plot>
        <PlotSvg viewBox={`0 0 ${WIDTH} ${HEIGHT}`} preserveAspectRatio="none">
            <g stroke="#ececec" strokeDasharray="2 2">
                {scale.map((price) => (
                    <path key={price} d={`M0 ${Math.round(priceY(price)) + 0.5}H${WIDTH}`} />
                ))}
                {monthLines.map((week) => (
                    <path key={week} d={`M${candleX(week) + 0.5} 12V${HEIGHT}`} />
                ))}
            </g>
            {candles.map(([kind, high, open, close, low], index) => (
                <Candle
                    key={index}
                    kind={kind}
                    x={candleX(index)}
                    high={high}
                    open={open}
                    close={close}
                    low={low}
                />
            ))}
            <path d="M0 354L788 11" stroke="#777" strokeWidth="0.800" />
            {levels.map(({ value, line }) =>
                line ? (
                    <path key={value} d={`M409 ${Math.round(priceY(value))}H1041`} stroke="#0a7d12" strokeWidth="2" />
                ) : (
                    <path
                        key={value}
                        d={`M0 ${Math.round(priceY(value)) + 0.5}H1041`}
                        stroke="#000"
                        strokeWidth="1.500"
                        strokeDasharray="2 1"
                    />
                )
            )}
            <path d="M0 262.500H1036" stroke="#000" strokeDasharray="4 3" />
            <path d={`M993.500 0V${HEIGHT}`} stroke="#000" strokeDasharray="5 3" />
        </PlotSvg>
        <PlotCaption>
            TickerChart <bdi>إكسترا شموع مفرغة</bdi> (4003) O:69.7 {' '}H:74.5 {' '}L:69.0 {' '}C:74.1
        </PlotCaption>
        <PlotMini>
            <svg width="32" height="7" viewBox="0 0 32 7" fill="none" stroke="#b58f7c">
                <path d="M2 5.500h6M22 3.500h8" />
                <circle cx="15" cy="3.500" r="3" />
                <path d="M14 3.500h2" />
            </svg>
        </PlotMini>
        {levels.map(({ value, color, size }) => (
            <LevelLabel key={value} $color={color} $size={size} style={top(priceY(value) - 1)}>
                {value.toFixed(2)}
            </LevelLabel>
        ))}
        <EventBadge $color="#4a5590" style={left(200)}>D</EventBadge>
        <EventBadge $color="#4a5590" style={left(438)}>D</EventBadge>
        <EventBadge $color="#d8b688" style={left(565)}>B</EventBadge>
        <EventBadge $color="#3c8bb0" style={left(558)}>P</EventBadge>
        <CrossHandle style={top(262)}>+</CrossHandle>
        <Pointer style={{ ...left(812), ...top(427) }}>
            <svg width="9" height="14" viewBox="0 0 9 14">
                <path d="M1 1v10l2-2 2 4 1.500-1L5 8h3z" fill="#fff" stroke="#222" />
            </svg>
        </Pointer>
    </Plot>
)

const Tab = ({ name, width, active }) => (
    <TabItem $width={width} $active={active}>
        <Marker />
        <TabName>{name}</TabName>
        {active && <Icon name="restore" size={6} />}
        <svg width="6" height="6" viewBox="0 0 6 6" fill="none" stroke={active ? '#444' : '#aaa'}>
            <path d="M.5.5h5v5h-5z" />
        </svg>
        <Icon name="close" size={8} color={active ? '#333' : '#888'} />
    </TabItem>
)

const Buttons = ({ names, size, faded }) =>
    names.map((name, index) => (
        <IconButton key={name + index} aria-label={name} $faded={faded}>
            {name === 'fx' ? <FxIcon /> : name === 'abc' ? <AbcIcon /> : <Icon name={name} size={size} />}
        </IconButton>
    ))

const views = [
    { name: 'أسبوع', icon: 'clock', width: 41 },
    { name: 'سنة', icon: 'range', width: 31 },
    { name: 'اضافة مؤشر', icon: 'trend', width: 67 },
    { name: 'المتوسطات المتحركة', icon: 'average', width: 105 },
    { name: 'بروفايل الحجم', icon: 'profile', width: 75 },
    { name: 'شموع مفرغة', icon: 'candles', width: 69 },
    { name: 'أدوات ذكية', icon: 'smart', width: 61 }
]

const Toolbars = () => (
    <>
        <Toolbar $height={22} $inset={11}>
            <LabelButton $width={35} $space={0}>
                <Icon name="smart" />
                ملف
            </LabelButton>
            <LabelButton $width={42} $space={21}>
                <Icon name="chartBox" />
                مقارنة
            </LabelButton>
            <Separator $space={12} />
            <ToolGroup $width={46} $space={1}>
                <Buttons names={['redo', 'undo']} faded />
            </ToolGroup>
            <Separator $space={5} />
            <ToolGroup $width={180} $space={2}>
                <Buttons names={['smallBox', 'smallBox', 'hand', 'pin']} />
                <IconButton aria-label="waves">
                    <Icon name="waves" color="#4f87b5" />
                </IconButton>
                <IconButton aria-label="waves">
                    <Icon name="waves" color="#c33" />
                </IconButton>
                <Buttons names={['mail', 'share']} />
            </ToolGroup>
            <Separator $space={3} />
            <ToolGroup $width={112} $space={4}>
                <Buttons names={['settings', 'fx', 'sound', 'scroll', 'bars']} />
            </ToolGroup>
        </Toolbar>
        <Toolbar $height={20} $inset={8}>
            <EditButton aria-label="تحرير">
                <Pencil size={12} fill="#fff" strokeWidth={1} />
            </EditButton>
            <Separator $space={4} />
            {views.map(({ name, icon, width }) => (
                <React.Fragment key={name}>
                    <LabelButton $width={width} $space={8}>
                        {icon === 'average' ? <AverageIcon /> : <Icon name={icon} />}
                        {name}
                    </LabelButton>
                    <Separator $space={12} />
                </React.Fragment>
            ))}
            <SearchBox>
                <SearchButton aria-label="بحث">
                    <Icon name="search" size={11} />
                </SearchButton>
                <SearchInput aria-label="السهم" defaultValue="[TAD.4003] - إكسترا" />
            </SearchBox>
        </Toolbar>
    </>
)

const Palettes = () => (
    <>
        <Palette $left={15} $top={26} $width={302} $height={27}>
            <Grip />
            <PaletteTools $space={4}>
                <Buttons
                    names={['segment', 'angle', 'horizontal', 'vertical', 'abc', 'ray', 'arrow', 'fib', 'measure', 'channel']}
                    size={13}
                />
            </PaletteTools>
            <CloseButton aria-label="إغلاق">
                <Icon name="close" size={7} />
            </CloseButton>
        </Palette>
        <Palette $left={335} $top={16} $width={316} $height={29}>
            <Grip />
            <PenTools>
                <IconButton aria-label="لون الخط">
                    <Icon name="pen" size={11} />
                </IconButton>
                <Swatch $color="#111" aria-label="أسود" />
                <IconButton aria-label="لون التعبئة">
                    <Icon name="bucket" />
                </IconButton>
                <Swatch $color="#d9262c" aria-label="أحمر" />
            </PenTools>
            <LineStyle $color="#111" aria-label="سماكة الخط" />
            <LineStyle $color="#666" aria-label="نوع الخط" />
            <PaletteTools>
                <Buttons names={['select', 'copy', 'eraser']} />
                <IconButton aria-label="إظهار" $faded>
                    <Eye size={12} strokeWidth={3} />
                </IconButton>
                <IconButton aria-label="قفل" $faded>
                    <Icon name="padlock" />
                </IconButton>
            </PaletteTools>
        </Palette>
    </>
)

const Tools = () => (
    <ToolColumn>
        <Tool aria-label="star">
            <Star size={12} fill="#e0922a" color="#e0922a" />
        </Tool>
        <Tool aria-label="cursor">
            <Icon name="cursor" size={13} />
        </Tool>
        <Tool aria-label="cross" $active>
            <Icon name="cross" size={14} />
        </Tool>
        <Tool aria-label="link">
            <Link size={14} />
        </Tool>
        <ToolRule />
        <Tool aria-label="crossThin">
            <Icon name="crossThin" size={14} />
        </Tool>
        {['line', 'box', 'fib', 'pattern', 'zigzag'].map((name) => (
            <Tool key={name} aria-label={name} $menu>
                <Icon name={name} size={14} />
            </Tool>
        ))}
        <ToolRule />
        <Tool aria-label="abc" $menu>
            <AbcIcon />
        </Tool>
        <Tool aria-label="flag" $menu>
            <Icon name="flag" color="#111" />
        </Tool>
        <ToolRule />
        {['settings', 'candleChart', 'magnet', 'penLock'].map((name) => (
            <Tool key={name} aria-label={name}>
                <Icon name={name} size={14} />
            </Tool>
        ))}
        <Tool aria-label="hide">
            <EyeOff size={13} />
        </Tool>
        <Tool aria-label="lock">
            <Icon name="padlock" color="#444" />
        </Tool>
        <ToolRule />
        <Tool aria-label="delete">
            <Trash2 size={13} />
        </Tool>
    </ToolColumn>
)

const Chart = () => (
    <ChartColumn>
        <Tabs>
            {tabs.map((tab) => (
                <Tab key={tab.name} {...tab} />
            ))}
            <TabMore>»</TabMore>
        </Tabs>
        <ChartArea>
            <PlotColumn>
                <PricePlot />
                <Dates>
                    {months.map(([name, weeks], index) => (
                        <Month key={index} $weeks={weeks}>
                            {name}
                        </Month>
                    ))}
                    <DateTag>2023-04-30 Sunday</DateTag>
                </Dates>
            </PlotColumn>
            <PriceAxis>
                <Scale>
                    {scale.map((price) => (
                        <Price key={price}>{Math.abs(price - lastPrice) > 0.5 && price.toFixed(4)}</Price>
                    ))}
                </Scale>
                <PriceTag $color="#b2b2b2" style={top(257)}>89.3258</PriceTag>
                <PriceTag $color="#5d9c7d" style={top(441)}>{lastPrice.toFixed(4)}</PriceTag>
                <ScaleMode>خطي</ScaleMode>
            </PriceAxis>
        </ChartArea>
        <BottomBar>
            <Scroll>
                <ScrollArrow aria-label="يسار">◀</ScrollArrow>
                <Track>
                    <Thumb />
                </Track>
                <ScrollArrow aria-label="يمين">▶</ScrollArrow>
            </Scroll>
            <BottomTools>
                <Buttons
                    names={['smallBox', 'smallBox', 'zoomArea', 'zoomReset', 'zoomOut', 'zoomIn', 'previous']}
                />
            </BottomTools>
            <CodeSelect aria-label="رمز السهم">
                <option>4003</option>
            </CodeSelect>
            <NextButton aria-label="التالي">
                <Icon name="next" />
            </NextButton>
        </BottomBar>
    </ChartColumn>
)

const SystemBar = () => (
    <Taskbar>
        <Tray>
            <TrayButton aria-label="الإشعارات">
                <Icon name="notice" size={11} />
            </TrayButton>
            <Clock>
                <div dir="rtl">04:54 م</div>
                17/06/1444
            </Clock>
            <TrayButton $width={19}>ع</TrayButton>
            <TrayButton aria-label="الصوت" $width={20}>
                <Icon name="volume" />
            </TrayButton>
            {['wifi', 'screen', 'mic', 'webcam', 'power', 'chevron'].map((name) => (
                <TrayButton key={name} aria-label={name} $width={16}>
                    <Icon name={name} size={name === 'chevron' ? 9 : 12} />
                </TrayButton>
            ))}
            <Weather>
                <WeatherIcon />
                18°C
                <WeatherText>مشمس جزئيًا</WeatherText>
            </Weather>
            <Battery>100%</Battery>
            <TrayButton aria-label="الشاحن">
                <Icon name="plug" size={10} />
            </TrayButton>
        </Tray>
        <AppButton aria-label="Telegram" $open><TelegramIcon /></AppButton>
        <AppButton aria-label="Word" $open><WordIcon /></AppButton>
        <AppButton aria-label="TickerChart" $open $active><TickerIcon /></AppButton>
        <AppButton aria-label="Explorer" $open><FolderIcon /></AppButton>
        <AppButton aria-label="Edge"><EdgeIcon /></AppButton>
        <AppButton aria-label="Chrome" $open><ChromeIcon /></AppButton>
        <AppButton aria-label="Calculator"><CalculatorIcon /></AppButton>
        <AppButton aria-label="Task view"><Icon name="taskView" /></AppButton>
        <TaskSearch>
            <Icon name="loupe" size={11} />
            <TaskInput placeholder="اكتب هنا للبحث" />
        </TaskSearch>
        <StartButton aria-label="ابدأ">
            <Icon name="windows" />
        </StartButton>
    </Taskbar>
)

const App = () => (
    <Desktop>
        <Global />
        <Window>
            <TitleBar>
                <WindowButtons>
                    <WindowButton $close aria-label="إغلاق"><Icon name="close" size={9} /></WindowButton>
                    <WindowButton aria-label="استعادة"><Icon name="restore" size={9} /></WindowButton>
                    <WindowButton aria-label="تصغير"><Icon name="minimize" size={9} /></WindowButton>
                    <WindowButton aria-label="تسجيل"><Icon name="camera" size={11} /></WindowButton>
                </WindowButtons>
                <WindowTitle dir="rtl">مركز الرسم البياني</WindowTitle>
            </TitleBar>
            <Palettes />
            <Body>
                <Main>
                    <Toolbars />
                    <Workspace>
                        <Chart />
                        <Tools />
                    </Workspace>
                </Main>
                <SidePanel>
                    <SideTab>
                        <svg width="7" height="7" viewBox="0 0 7 7" fill="none" stroke="#555">
                            <path d="M.5.5h6v6h-6z" />
                        </svg>
                        لائحة أسهمي
                    </SideTab>
                </SidePanel>
            </Body>
        </Window>
        <SystemBar />
    </Desktop>
)

export default App
